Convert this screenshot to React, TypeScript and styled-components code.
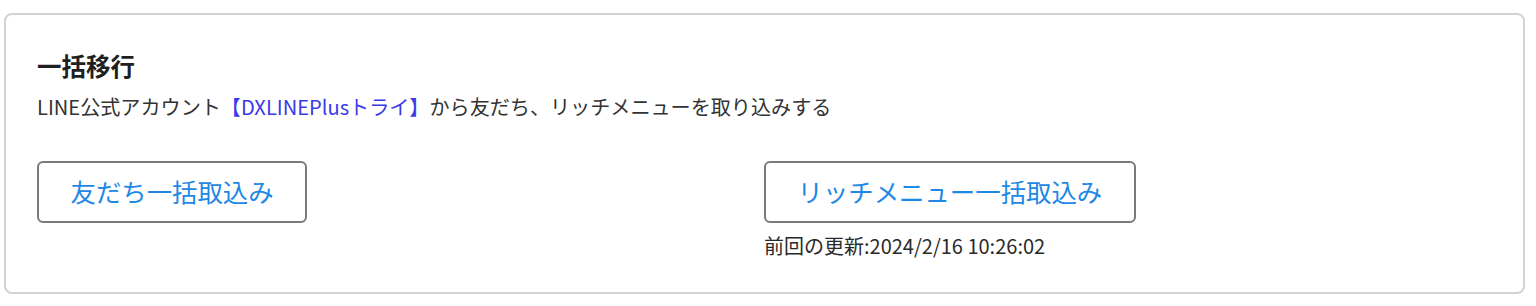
import { FC } from "react"
import styled, { createGlobalStyle } from "styled-components"

const GlobalStyle = createGlobalStyle`
  body {
    margin: 0;
    background: #ffffff;
    font-family: "Noto Sans CJK JP", "Noto Sans", sans-serif;
  }
`

const Page = styled.div`
  padding: 13px 11px 12px 4px;
`

const Card = styled.section`
  border: 2px solid #d3d3d3;
  border-radius: 8px;
  padding: 35px 32px 33px 31px;
  background: #ffffff;
`

const Title = styled.h2`
  margin: 0;
  font-size: 24.5px;
  line-height: 32px;
  font-weight: 700;
  color: #1f1f1f;
`

const Description = styled.p`
  margin: 11px 0 0;
  font-size: 20.1px;
  line-height: 28px;
  color: #333333;
  white-space: nowrap;
`

const AccountName = styled.span`
  color: #3a3ae8;
`

const Actions = styled.div`
  display: grid;
  grid-template-columns: 1fr 1fr;
  margin-top: 40px;
`

const Column = styled.div`
  display: flex;
  flex-direction: column;
  align-items: flex-start;
`

const ImportButton = styled.button`
  height: 62px;
  padding: 0 31.5px;
  border: 2px solid #7a7a7a;
  border-radius: 6px;
  background: #ffffff;
  color: #1e88e5;
  font-family: inherit;
  font-size: 25.4px;
  line-height: 1;
  cursor: pointer;
`

const UpdatedAt = styled.div`
  margin-top: 10px;
  font-size: 20px;
  line-height: 26px;
  color: #2a2a2a;
`

const App: FC = () => {
  return (
    <Page>
      <GlobalStyle />
      <Card>
        <Title>一括移行</Title>
        <Description>
          LINE公式アカウント<AccountName>【DXLINEPlusトライ】</AccountName>から友だち、リッチメニューを取り込みする
        </Description>
        <Actions>
          <Column>
            <ImportButton>友だち一括取込み</ImportButton>
          </Column>
          <Column>
            <ImportButton>リッチメニュー一括取込み</ImportButton>
            <UpdatedAt>前回の更新:2024/2/16 10:26:02</UpdatedAt>
          </Column>
        </Actions>
      </Card>
    </Page>
  )
}

export default App
